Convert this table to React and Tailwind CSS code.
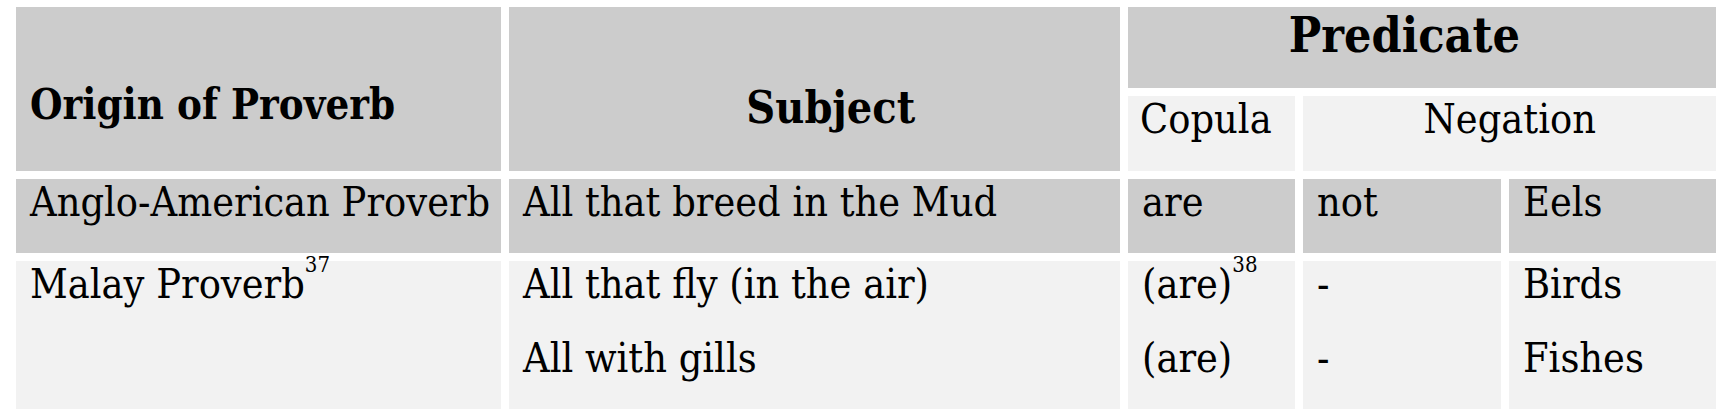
import React from 'react'

const font = { fontFamily: '"DejaVu Serif", serif' }

// the source text is narrower than DejaVu Serif, so each run is squeezed horizontally
const Cell = ({ lines, tone = 'dark', sup }) => (
  <td className={tone === 'dark' ? 'align-top p-0 px-[14px] bg-[#cccccc]' : 'align-top p-0 px-[14px] bg-[#f2f2f2]'}>
    {lines.map((line, i) => (
      <div key={i} className="h-[74px] whitespace-nowrap">
        <span className="inline-block whitespace-nowrap origin-left scale-x-90">
          {line}
          {sup && i === 0 && <sup className="text-[22px] align-super leading-none">{sup}</sup>}
        </span>
      </div>
    ))}
  </td>
)

export default function App() {
  return (
    <div className="bg-white w-[1725px] h-[412px] overflow-hidden" style={font}>
      <table className="ml-2 -mt-px table-fixed w-[1716px] border-separate border-spacing-2 text-[41px] leading-[1.164] text-black">
        <colgroup>
          <col className="w-[485px]" />
          <col className="w-[611px]" />
          <col className="w-[167px]" />
          <col className="w-[198px]" />
          <col className="w-[207px]" />
        </colgroup>
        <thead>
          <tr>
            <th rowSpan={2} className="align-top p-0 pt-[74px] px-[14px] text-left font-bold text-[42px] bg-[#cccccc] h-[164px]">
              <span className="inline-block whitespace-nowrap origin-left scale-x-89">Origin of Proverb</span>
            </th>
            <th rowSpan={2} className="align-top p-0 pt-[75px] pl-[32px] text-center font-bold text-[44px] bg-[#cccccc]">
              <span className="inline-block whitespace-nowrap origin-center scale-x-91">Subject</span>
            </th>
            <th colSpan={3} className="align-top p-0 pt-[4px] pr-[36px] text-center font-bold text-[48px] leading-none bg-[#cccccc] h-[81px]">
              <span className="inline-block whitespace-nowrap origin-center scale-x-90">Predicate</span>
            </th>
          </tr>
          <tr>
            <td className="align-top p-0 px-[12px] bg-[#f2f2f2] h-[75px] font-normal">
              <span className="inline-block whitespace-nowrap origin-left scale-x-90">Copula</span>
            </td>
            <td colSpan={2} className="align-top p-0 text-center bg-[#f2f2f2] font-normal">
              <span className="inline-block whitespace-nowrap origin-center scale-x-90">Negation</span>
            </td>
          </tr>
        </thead>
        <tbody>
          <tr>
            <Cell lines={['Anglo-American Proverb']} />
            <Cell lines={['All that breed in the Mud']} />
            <Cell lines={['are']} />
            <Cell lines={['not']} />
            <Cell lines={['Eels']} />
          </tr>
          <tr>
            <Cell tone="light" lines={['Malay Proverb']} sup="37" />
            <Cell tone="light" lines={['All that fly (in the air)', 'All with gills']} />
            <Cell tone="light" lines={['(are)', '(are)']} sup="38" />
            <Cell tone="light" lines={['-', '-']} />
            <Cell tone="light" lines={['Birds', 'Fishes']} />
          </tr>
        </tbody>
      </table>
    </div>
  )
}
